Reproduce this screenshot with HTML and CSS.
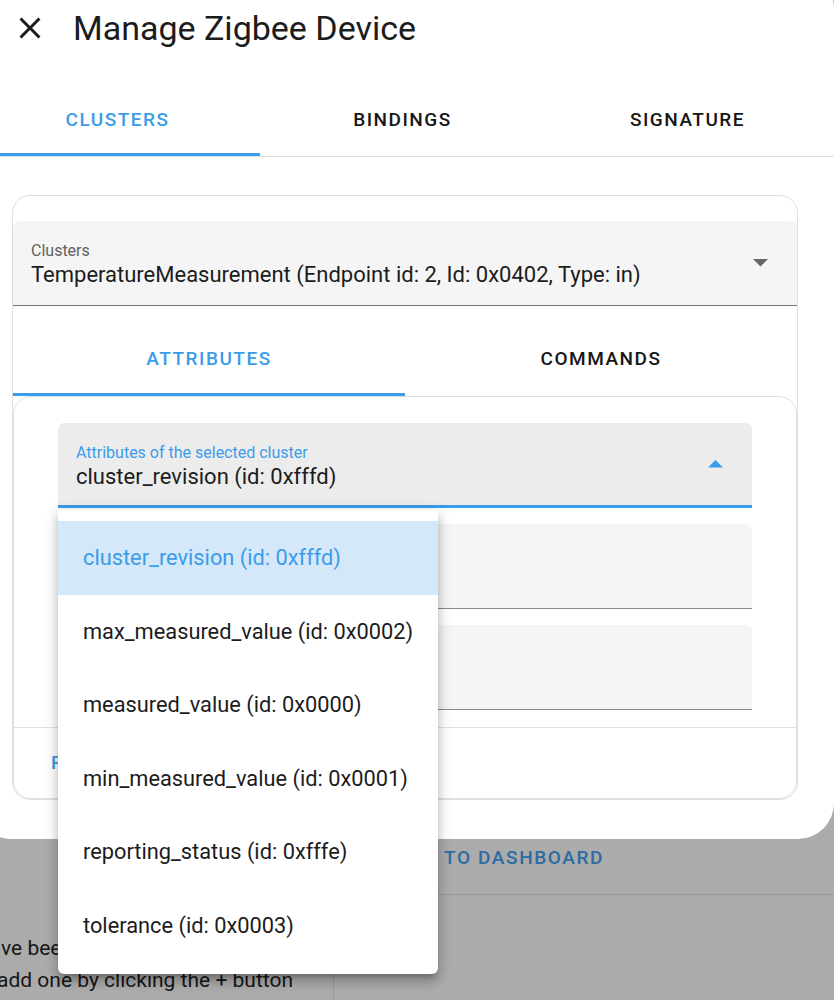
FILE: index.html
```html
<!DOCTYPE html>
<html lang="en">
<head>
    <meta charset="UTF-8">
    <meta name="viewport" content="width=device-width, initial-scale=1.0">
    <title>Manage Zigbee Device</title>
    <link rel="stylesheet" href="styles.css">
</head>
<body>
    <div class="page">
        <div class="page-actions">
            <span class="text-btn">Go to dashboard</span>
        </div>
        <div class="page-body">
            <div class="empty-note">
                <div class="note-1">ve been added yet. You can</div>
                <div class="note-2">add one by clicking the + button</div>
            </div>
            <div class="page-card"></div>
        </div>
    </div>

    <div class="dialog">
        <div class="dialog-header">
            <svg class="close-icon" viewBox="0 0 24 24"><path d="M19 6.41L17.59 5 12 10.59 6.41 5 5 6.41 10.59 12 5 17.59 6.41 19 12 13.41 17.59 19 19 17.59 13.41 12z"/></svg>
            <h2>Manage Zigbee Device</h2>
        </div>

        <div class="tabs main-tabs">
            <div class="tab active">Clusters</div>
            <div class="tab">Bindings</div>
            <div class="tab">Signature</div>
        </div>

        <div class="dialog-content">
            <div class="card">
                <div class="select">
                    <div class="select-text">
                        <div class="select-label">Clusters</div>
                        <div class="select-value">TemperatureMeasurement (Endpoint id: 2, Id: 0x0402, Type: in)</div>
                    </div>
                    <svg class="arrow" viewBox="0 0 10 5"><path d="M0 0l5 5 5-5z"/></svg>
                </div>

                <div class="tabs sub-tabs">
                    <div class="tab active">Attributes</div>
                    <div class="tab">Commands</div>
                </div>

                <div class="inner-card">
                    <div class="card-content">
                        <div class="select-wrap">
                            <div class="select focused">
                                <div class="select-text">
                                    <div class="select-label">Attributes of the selected cluster</div>
                                    <div class="select-value">cluster_revision (id: 0xfffd)</div>
                                </div>
                                <svg class="arrow" viewBox="0 0 10 5"><path d="M0 5l5-5 5 5z"/></svg>
                            </div>
                            <ul class="menu">
                                <li class="selected">cluster_revision (id: 0xfffd)</li>
                                <li>max_measured_value (id: 0x0002)</li>
                                <li>measured_value (id: 0x0000)</li>
                                <li>min_measured_value (id: 0x0001)</li>
                                <li>reporting_status (id: 0xfffe)</li>
                                <li>tolerance (id: 0x0003)</li>
                            </ul>
                        </div>
                        <div class="field"></div>
                        <div class="field"></div>
                    </div>
                    <div class="card-actions">
                        <span class="text-btn">Read attribute</span>
                    </div>
                </div>
            </div>
        </div>
    </div>
</body>
</html>
```

FILE: styles.css
```css
body {
    margin: 0;
    height: 1000px;
    overflow: hidden;
    background: #ababab;
    font-family: Roboto, "Noto Sans", sans-serif;
    color: #1c1c1c;
}

/* background page */
.page-actions {
    padding: 846px 0 0 409px;
    height: 894px;
    box-sizing: border-box;
}
.text-btn {
    font-size: 19px;
    font-weight: 500;
    letter-spacing: 1.6px;
    line-height: 24px;
    text-transform: uppercase;
    color: #3b9ce9;
}
.page-actions .text-btn { color: #2c6ca2; }
.page-body { display: flex; }
.empty-note {
    width: 333px;
    flex: none;
    padding-top: 38px;
    font-size: 21px;
    line-height: 32px;
    color: #161616;
    white-space: nowrap;
}
.note-1 { padding-left: 1px; }
.note-2 { margin-left: -3px; }
.page-card {
    flex: 1;
    height: 105px;
    border-top: 1px solid #999;
    border-left: 1px solid #999;
    border-top-left-radius: 12px;
}

/* dialog */
.dialog {
    position: absolute;
    left: -25px;
    top: -28px;
    width: 859px;
    height: 867px;
    background: #fff;
    border-radius: 36px;
}
.dialog-header {
    display: flex;
    align-items: center;
    padding: 38px 0 0 37px;
}
.close-icon { width: 36px; height: 36px; fill: #1c1c1c; flex: none; }
.dialog-header h2 {
    margin: 0 0 0 25px;
    font-size: 34px;
    font-weight: 400;
    line-height: 36px;
}

.tabs { display: flex; }
.tab {
    display: flex;
    align-items: center;
    justify-content: center;
    box-sizing: border-box;
    border-bottom: 3px solid transparent;
    font-size: 19px;
    font-weight: 500;
    letter-spacing: 1.5px;
    text-transform: uppercase;
    color: #161616;
}
.tab.active { color: #3b9ce9; border-bottom-color: #3b9ce9; }
.main-tabs {
    margin-top: 39px;
    border-bottom: 1px solid #e0e0e0;
}
.main-tabs .tab { width: 285px; height: 71px; }
.sub-tabs { margin-top: 18px; }
.sub-tabs .tab { flex: 1; height: 72px; }

.dialog-content { padding: 38px 36px 0 37px; }
.card {
    border: 1px solid #e0e0e0;
    border-radius: 18px;
    padding-top: 25px;
}

.select {
    display: flex;
    align-items: center;
    height: 84px;
    background: #f5f5f5;
    border-bottom: 1px solid #757575;
    border-radius: 6px 6px 0 0;
    padding-left: 18px;
}
.select.focused {
    height: 82px;
    background: #ececec;
    border-bottom: 3px solid #3b9ce9;
}
.select-text { flex: 1; align-self: flex-start; padding-top: 20px; }
.select-label { font-size: 16px; line-height: 20px; color: #616161; }
.focused .select-label { color: #3b9ce9; }
.select-value { font-size: 22px; line-height: 28px; color: #1c1c1c; }
.arrow { width: 15px; height: 7.5px; margin-right: 29px; fill: #666; }
.focused .arrow { fill: #3b9ce9; }

.inner-card {
    border: 1px solid #e0e0e0;
    border-radius: 18px;
}
.card-content { padding: 26px 44px 17px; }
.select-wrap { position: relative; }
.field {
    height: 84px;
    margin-top: 16px;
    background: #f5f5f5;
    border-bottom: 1px solid #8a8a8a;
    border-radius: 6px 6px 0 0;
}
.card-actions {
    height: 70px;
    border-top: 1px solid #e0e0e0;
    display: flex;
    align-items: center;
    padding-left: 37px;
}

/* dropdown menu */
.menu {
    position: absolute;
    top: calc(100% + 2px);
    left: 0;
    width: 380px;
    margin: 0;
    padding: 11px 0 12px;
    list-style: none;
    background: #fff;
    border-radius: 0 0 6px 6px;
    box-shadow: 0 5px 5px -3px rgba(0, 0, 0, 0.2), 0 8px 10px 1px rgba(0, 0, 0, 0.14), 0 3px 14px 2px rgba(0, 0, 0, 0.12);
    z-index: 2;
}
.menu li {
    height: 73.5px;
    display: flex;
    align-items: center;
    padding-left: 25px;
    font-size: 21.8px;
    color: #1c1c1c;
}
.menu li.selected { background: #d4e8f9; color: #3b9ce9; }
```
